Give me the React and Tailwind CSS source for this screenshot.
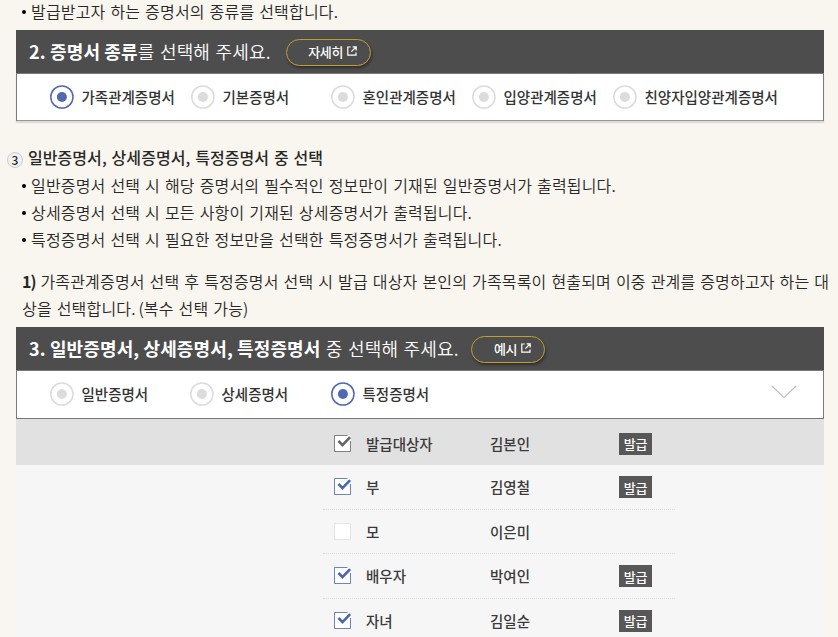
import React from "react";

const certTypes = [
  { label: "가족관계증명서", width: "w-[141px]", checked: true },
  { label: "기본증명서", width: "w-[140px]" },
  { label: "혼인관계증명서", width: "w-[141px]" },
  { label: "입양관계증명서", width: "w-[141px]" },
  { label: "친양자입양관계증명서", width: "w-[180px]" },
];

const certForms = [
  { label: "일반증명서", width: "w-[140px]" },
  { label: "상세증명서", width: "w-[141px]" },
  { label: "특정증명서", width: "w-[140px]", checked: true },
];

const notes = [
  "일반증명서 선택 시 해당 증명서의 필수적인 정보만이 기재된 일반증명서가 출력됩니다.",
  "상세증명서 선택 시 모든 사항이 기재된 상세증명서가 출력됩니다.",
  "특정증명서 선택 시 필요한 정보만을 선택한 특정증명서가 출력됩니다.",
];

const family = [
  { relation: "부", name: "김영철", checked: true },
  { relation: "모", name: "이은미", checked: false },
  { relation: "배우자", name: "박여인", checked: true },
  { relation: "자녀", name: "김일순", checked: true },
];

const Bullet = ({ children }) => (
  <li className="flex h-[27px] items-center whitespace-nowrap">
    <span className="mr-[5px] size-[4px] rounded-full bg-black" />
    <span className="pb-[2px]">{children}</span>
  </li>
);

const PillButton = ({ children, className }) => (
  <button
    className={`mt-px flex h-[27px] items-center justify-end rounded-full border border-[#c0a02e] pr-[13px] text-[13px] font-medium text-white shadow-[1px_2px_3px_rgba(0,0,0,0.4)] ${className}`}
  >
    <span className="whitespace-nowrap tracking-[-0.4px] [word-spacing:0]">
      {children}
    </span>
    <svg
      className="mb-[2px] ml-[4px] size-[10px]"
      viewBox="0 0 10 10"
      fill="none"
      stroke="#fff"
      strokeWidth="1.2"
    >
      <path d="M3.6 1H.8v8.2H9V6.4M5.6 .8h3.6v3.6M9 1 4.4 5.6" />
    </svg>
  </button>
);

const Radio = ({ label, width, checked }) => (
  <label className={`flex items-center whitespace-nowrap ${width}`}>
    <svg className="size-6 shrink-0" viewBox="0 0 24 24" fill="none">
      <circle
        cx="11.9"
        cy="12"
        r="11.1"
        strokeWidth="1.5"
        className={checked ? "stroke-[#5069b0]" : "stroke-[#dcdcdc]"}
      />
      <circle
        cx="11.9"
        cy="12"
        r="5"
        className={checked ? "fill-[#5069b0]" : "fill-[#dcdcdc]"}
      />
    </svg>
    <span className="ml-[7.5px] text-[14.5px] font-medium tracking-normal text-[#333]">
      {label}
    </span>
  </label>
);

const Checkbox = ({ checked, color }) => (
  <svg className="size-[18px] shrink-0" viewBox="0 0 18 18" fill="none">
    {checked ? (
      <>
        <path d="M.5 .5h16v16H.5z" fill="#fff" />
        <path d="M13.5 .5H.5v16h16V6" stroke={color} strokeOpacity="0.8" />
        <path d="m4.5 6 4 4.2 7.6-8" stroke={color} strokeWidth="2.6" />
      </>
    ) : (
      <path d="M.5 .5h16v16H.5z" fill="#fff" stroke="#e4e4e4" />
    )}
  </svg>
);

const Row = ({ relation, name, checked, color, className }) => (
  <div
    className={`ml-[307px] flex w-[352px] items-center pl-[11px] text-[14.5px] font-medium tracking-normal text-[#3a3a3a] ${className}`}
  >
    <Checkbox checked={checked} color={color} />
    <span className="ml-[14px] w-[124px]">{relation}</span>
    <span className="w-[129px]">{name}</span>
    {checked && (
      <span className="flex h-[22px] w-[33px] items-center justify-center whitespace-nowrap bg-[#575757] text-[13px] tracking-[-0.3px] text-white">
        발급
      </span>
    )}
  </div>
);

const App = () => {
  return (
    <div className="flex h-[637px] w-[838px] flex-col overflow-hidden bg-[#f9f6ef] font-['Noto_Sans_CJK_KR',sans-serif] text-[16px] font-[350] tracking-[0.17px] text-[#282828] [word-spacing:1.2px]">
      <ul className="-mt-[2px] h-8 shrink-0 pl-[22px]">
        <Bullet>발급받고자 하는 증명서의 종류를 선택합니다.</Bullet>
      </ul>

      <section className="ml-4 w-[808px] shrink-0">
        <div className="flex h-[43px] items-center bg-[#4d4d4d] pl-[13px] text-[18px] text-white">
          <h2 className="w-[257px] whitespace-nowrap">
            <b className="font-bold tracking-[0.15px] [word-spacing:0]">
              2. 증명서 종류
            </b>
            를 선택해 주세요.
          </h2>
          <PillButton className="w-[85px]">자세히</PillButton>
        </div>
        <div className="flex h-12 items-center border border-[#7a7a7a] border-b-[#959595] bg-white pl-[33px] shadow-[0_2px_1px_#dddcd9]">
          {certTypes.map((item) => (
            <Radio key={item.label} {...item} />
          ))}
        </div>
      </section>

      <div className="mt-[23px] flex h-[29px] shrink-0 items-center pl-[7px]">
        <span className="mt-[3px] flex size-4 items-center justify-center rounded-full border border-[#c9ccd3] bg-[#f1f1f1] text-[12px] font-medium">
          3
        </span>
        <h3 className="ml-[5px] whitespace-nowrap pb-[3px] font-medium tracking-[0.06px]">
          일반증명서, 상세증명서, 특정증명서 중 선택
        </h3>
      </div>
      <ul className="-mt-px shrink-0 pl-[22px]">
        {notes.map((note) => (
          <Bullet key={note}>{note}</Bullet>
        ))}
      </ul>

      <p className="mt-[15px] shrink-0 whitespace-nowrap pl-[22px] leading-[27px]">
        <b className="font-bold tracking-[-1px]">1)</b> 가족관계증명서 선택 후
        특정증명서 선택 시 발급 대상자 본인의 가족목록이 현출되며 이중 관계를
        증명하고자 하는 대
        <br />
        상을 선택합니다.<span className="[word-spacing:-1px]"> </span>(복수 선택
        가능)
      </p>

      <section className="ml-4 mt-[5px] w-[808px] shrink-0">
        <div className="flex h-[43px] items-center bg-[#4d4d4d] pl-[13px] text-[18px] text-white">
          <h2 className="w-[442px] whitespace-nowrap">
            <b className="font-bold tracking-[0.12px] [word-spacing:0]">
              3. 일반증명서, 상세증명서, 특정증명서
            </b>{" "}
            중 선택해 주세요.
          </h2>
          <PillButton className="w-[74px]">예시</PillButton>
        </div>
        <div className="flex h-[49px] items-center border border-[#7a7a7a] bg-white pb-px pl-[33px]">
          {certForms.map((item) => (
            <Radio key={item.label} {...item} />
          ))}
          <svg
            className="mb-[4px] ml-auto mr-[26px] h-[14px] w-[26px]"
            viewBox="0 0 26 14"
            fill="none"
            stroke="#c0c0c0"
            strokeWidth="1.2"
          >
            <path d="M.7 .7 13 12.7 25.3 .7" />
          </svg>
        </div>
        <div className="bg-[#e1e1e1]">
          <Row
            relation="발급대상자"
            name="김본인"
            checked
            color="#666"
            className="h-[46px] pt-[4px]"
          />
        </div>
        <div className="h-[172px] bg-[#f6f6f6]">
          {family.map((person) => (
            <Row
              key={person.name}
              {...person}
              color="#4a66b0"
              className="h-[44.5px] border-b border-dotted border-[#dcdcdc] pt-px"
            />
          ))}
        </div>
      </section>
    </div>
  );
};

export default App;
